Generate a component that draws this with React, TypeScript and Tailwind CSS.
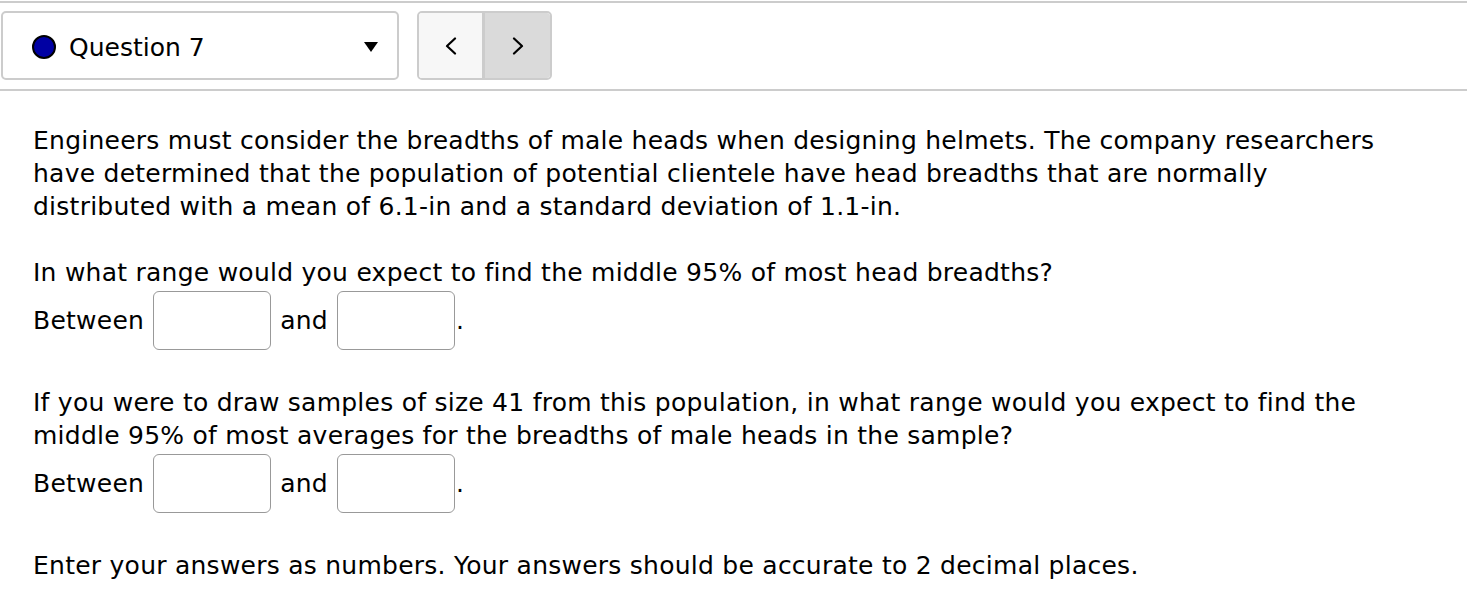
function AnswerBox() {
	return <input type="text" className="w-[118px] h-[59px] rounded-[6px] border-[1.5px] border-[#999] bg-white outline-none" />;
}

function Chevron({ dir }: { dir: 'left' | 'right' }) {
	return (
		<svg width="12" height="18" viewBox="0 0 12 18" fill="none" stroke="#000" strokeWidth="2.2" strokeLinecap="round" strokeLinejoin="round">
			{dir === 'left' ? <path d="M10 1.5 L2 9 L10 16.5" /> : <path d="M2 1.5 L10 9 L2 16.5" />}
		</svg>
	);
}

function BetweenRow({ className }: { className?: string }) {
	return (
		<div className={`flex items-center h-[59px] ${className ?? ''}`}>
			<span>Between</span>
			<span className="ml-[9px]">
				<AnswerBox />
			</span>
			<span className="ml-[9px]">and</span>
			<span className="ml-[9px]">
				<AnswerBox />
			</span>
			<span className="ml-px">.</span>
		</div>
	);
}

export default function App() {
	return (
		<div className="w-[1467px] h-[599px] bg-white text-black font-['DejaVu_Sans',sans-serif] text-[25px] tracking-[0.25px] overflow-hidden">
			<div className="mt-px h-[2px] bg-[#cccccc]" />

			<div className="flex items-stretch pt-[8px] pl-px tracking-normal">
				<div className="flex items-center w-[398px] h-[69px] rounded-[5px] border-2 border-[#cccccc] bg-white">
					<span className="ml-[29px] mt-[2px] w-[24px] h-[24px] rounded-full border-2 border-black bg-[#0000a3]" />
					<span className="ml-[13px] mt-[3px] text-[25px] leading-none">Question 7</span>
					<svg className="ml-auto mr-[19px] mt-[2px]" width="14" height="10" viewBox="0 0 14 10">
						<path d="M0 0 H14 L7 10 Z" fill="#000" />
					</svg>
				</div>

				<div className="flex ml-[18px] w-[135px] h-[69px] rounded-[5px] border-2 border-[#cccccc] overflow-hidden">
					<button className="flex items-center justify-center w-[66px] bg-[#f7f7f7] border-r-[3px] border-[#cccccc]">
						<Chevron dir="left" />
					</button>
					<button className="flex flex-1 items-center justify-center bg-[#dadada]">
						<Chevron dir="right" />
					</button>
				</div>
			</div>

			<div className="mt-[9px] h-[2px] bg-[#cccccc]" />

			<div className="pl-[33px] pt-[33px] leading-[33px]">
				<p>
					Engineers must consider the breadths of male heads when designing helmets. The company researchers
					<br />
					have determined that the population of potential clientele have head breadths that are normally
					<br />
					distributed with a mean of 6.1-in and a standard deviation of 1.1-in.
				</p>

				<p className="mt-[33px]">In what range would you expect to find the middle 95% of most head breadths?</p>
				<BetweenRow className="mt-[2px]" />

				<p className="mt-[36px]">
					If you were to draw samples of size 41 from this population, in what range would you expect to find the
					<br />
					middle 95% of most averages for the breadths of male heads in the sample?
				</p>
				<BetweenRow className="mt-[2px]" />

				<p className="mt-[36px]">Enter your answers as numbers. Your answers should be accurate to 2 decimal places.</p>
			</div>
		</div>
	);
}
